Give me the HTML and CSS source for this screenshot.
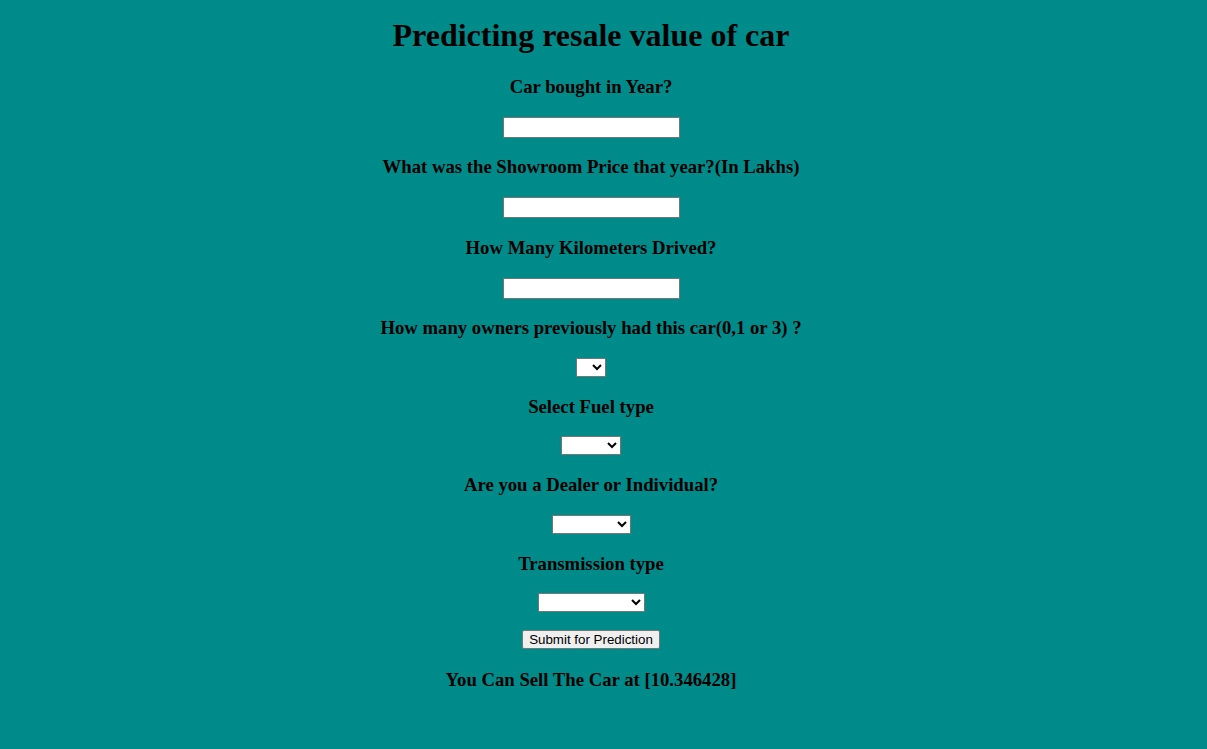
FILE: index.html
```html
<!DOCTYPE html>
<html>
<head>
<meta charset="utf-8">
<title>Predicting resale value of car</title>
<link rel="stylesheet" href="styles.css">
</head>
<body>
<div class="page">
  <h1 class="title">Predicting resale value of car</h1>
  <form class="form">
    <h3 class="label">Car bought in Year?</h3>
    <div class="row"><input class="field" type="text" name="Year"></div>
    <h3 class="label">What was the Showroom Price that year?(In Lakhs)</h3>
    <div class="row"><input class="field" type="text" name="Present_Price"></div>
    <h3 class="label">How Many Kilometers Drived?</h3>
    <div class="row"><input class="field" type="text" name="Kms_Driven"></div>
    <h3 class="label">How many owners previously had this car(0,1 or 3) ?</h3>
    <div class="row">
      <select class="pick" name="Owner">
        <option value="" selected></option>
        <option>0</option>
        <option>1</option>
        <option>3</option>
      </select>
    </div>
    <h3 class="label">Select Fuel type</h3>
    <div class="row">
      <select class="pick" name="Fuel_Type">
        <option value="" selected></option>
        <option>Petrol</option>
        <option>Diesel</option>
        <option>CNG</option>
      </select>
    </div>
    <h3 class="label">Are you a Dealer or Individual?</h3>
    <div class="row">
      <select class="pick" name="Seller_Type">
        <option value="" selected></option>
        <option>Dealer</option>
        <option>Individual</option>
      </select>
    </div>
    <h3 class="label">Transmission type</h3>
    <div class="row">
      <select class="pick" name="Transmission">
        <option value="" selected></option>
        <option>Manual Car</option>
        <option>Automatic Car</option>
      </select>
    </div>
    <div class="submit-row"><input class="submit" type="button" value="Submit for Prediction"></div>
  </form>
  <h3 class="result">You Can Sell The Car at [10.346428]</h3>
</div>
</body>
</html>
```

FILE: styles.css
```css
html, body {
  background-color: #008b8b;
}
body {
  margin: 8px;
  font-family: "Liberation Serif", "Times New Roman", serif;
  color: #000;
}
.page {
  margin-right: 25px;
  text-align: center;
}
.title {
  font-size: 32px;
  font-weight: bold;
  margin: 9px 0 22px;
}
.label, .result {
  font-size: 18.72px;
  font-weight: bold;
  margin: 18.72px 0;
}
.result {
  margin-top: 19.72px;
}
.row {
  line-height: normal;
}
.field {
  width: 177px;
  height: 21px;
  box-sizing: border-box;
  border: 1px solid #767676;
  padding: 1px 2px;
  font: 13.33px "Liberation Sans", Arial, sans-serif;
  background: #fff;
}
.pick {
  font: 13.33px "Liberation Sans", Arial, sans-serif;
  height: 19px;
  border: 1px solid #767676;
  background: #fff;
  border-radius: 0;
}
.submit-row {
  margin-top: 18px;
}
.submit {
  font: 13.33px "Liberation Sans", Arial, sans-serif;
  padding: 1px 6px;
  border: 1px solid #767676;
  background: #efefef;
  border-radius: 2px;
}
```
